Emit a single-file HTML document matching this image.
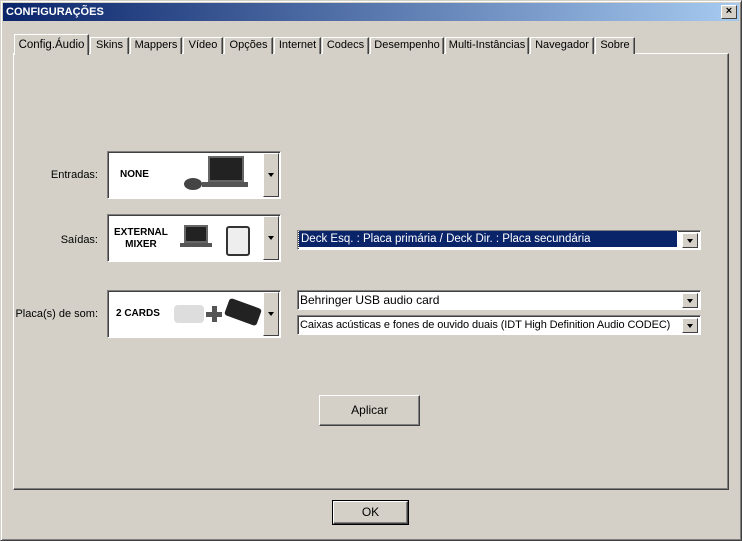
<!DOCTYPE html>
<html><head><meta charset="utf-8"><style>
*{margin:0;padding:0;box-sizing:border-box}
body{width:742px;height:541px;background:#d4d0c8;position:relative;overflow:hidden;font-family:"Liberation Sans",sans-serif;font-size:11px;color:#000}
.a{position:absolute}
.win{left:0;top:0;width:742px;height:541px;border-top:1px solid #d4d0c8;border-left:1px solid #d4d0c8;border-right:1px solid #404040;border-bottom:1px solid #404040;box-shadow:inset 1px 1px 0 #fff,inset -1px -1px 0 #808080}
.title{left:3px;top:3px;width:736px;height:18px;background:linear-gradient(90deg,#0a246a,#a6caf0);color:#fff;font-weight:bold;font-size:11px;line-height:18px;padding-left:3px}
.close{right:5px;top:5px;width:16px;height:14px;background:#d4d0c8;border:1px solid;border-color:#fff #404040 #404040 #fff;font-size:11px;font-weight:bold;line-height:11px;text-align:center}
.tab{top:37px;height:17px;border:1px solid;border-color:#fff #404040 transparent #fff;border-bottom:none;line-height:15px;text-align:center;background:#d4d0c8;box-shadow:inset -1px 0 0 #808080;white-space:nowrap}
.panel{left:13px;top:53px;width:716px;height:437px;border:1px solid;border-color:#fff #404040 #404040 #fff;box-shadow:inset -1px -1px 0 #808080}
.lbl{text-align:right;width:90px;left:8px;white-space:nowrap}
.img{left:107px;width:174px;height:48px;background:#fff;border:1px solid;border-color:#808080 #fff #fff #808080;box-shadow:inset 1px 1px 0 #404040}
.arr{right:1px;top:1px;width:16px;height:44px;background:#d4d0c8;border:1px solid;border-color:#fff #404040 #404040 #fff}
.arr:after,.darr:after{content:"";position:absolute;left:4px;top:50%;margin-top:-2px;border-left:3.5px solid transparent;border-right:3.5px solid transparent;border-top:4px solid #000}
.dd{left:297px;width:404px;height:20px;background:#fff;border:1px solid;border-color:#808080 #fff #fff #808080;box-shadow:inset 1px 1px 0 #404040;font-size:12px;line-height:18px;padding-left:2px;white-space:nowrap;overflow:hidden}
.darr{right:2px;top:2px;width:16px;height:15px;background:#d4d0c8;border:1px solid;border-color:#fff #404040 #404040 #fff}
.btn{border:1px solid;border-color:#fff #404040 #404040 #fff;box-shadow:inset -1px -1px 0 #808080;text-align:center}
.bt{font-weight:bold;font-size:10px;line-height:12px;text-align:center}
</style></head><body>
<div class="a win"></div>
<div class="a title">CONFIGURAÇÕES</div>
<div class="a close">×</div>
<div class="a panel"></div>
<div class="a tab" style="left:90px;width:39px">Skins</div>
<div class="a tab" style="left:130px;width:52px">Mappers</div>
<div class="a tab" style="left:183px;width:40px">Vídeo</div>
<div class="a tab" style="left:224px;width:49px">Opções</div>
<div class="a tab" style="left:274px;width:47px">Internet</div>
<div class="a tab" style="left:322px;width:47px">Codecs</div>
<div class="a tab" style="left:370px;width:74px">Desempenho</div>
<div class="a tab" style="left:445px;width:84px">Multi-Instâncias</div>
<div class="a tab" style="left:530px;width:64px">Navegador</div>
<div class="a tab" style="left:595px;width:40px">Sobre</div>
<div class="a tab" style="left:14px;top:34px;width:75px;height:21px;font-size:11.5px;line-height:20px;border-bottom:none">Config.Áudio</div>

<div class="a lbl" style="top:169px">Entradas:</div>
<div class="a lbl" style="top:234px">Saídas:</div>
<div class="a lbl" style="top:308px">Placa(s) de som:</div>

<div class="a img" style="top:151px">
 <div class="a bt" style="left:12px;top:17px">NONE</div>
 <div class="a" style="left:100px;top:4px;width:36px;height:26px;background:#222;border:2px solid #666"></div>
 <div class="a" style="left:94px;top:30px;width:46px;height:5px;background:#555"></div>
 <div class="a" style="left:76px;top:26px;width:18px;height:12px;border-radius:50%;background:#444"></div>
 <div class="arr a"></div>
</div>
<div class="a img" style="top:214px">
 <div class="a bt" style="left:6px;top:12px">EXTERNAL<br>MIXER</div>
 <div class="a" style="left:76px;top:10px;width:24px;height:18px;background:#222;border:2px solid #666"></div>
 <div class="a" style="left:72px;top:28px;width:32px;height:4px;background:#555"></div>
 <div class="a" style="left:118px;top:11px;width:24px;height:30px;background:#eee;border:2px solid #333;border-radius:3px"></div>
 <div class="arr a"></div>
</div>
<div class="a img" style="top:290px">
 <div class="a bt" style="left:8px;top:17px">2 CARDS</div>
 <div class="a" style="left:66px;top:14px;width:30px;height:18px;background:#ddd;border-radius:4px"></div>
 <div class="a" style="left:98px;top:21px;width:16px;height:5px;background:#555"></div>
 <div class="a" style="left:104px;top:15px;width:5px;height:16px;background:#555"></div>
 <div class="a" style="left:118px;top:12px;width:34px;height:18px;background:#222;border-radius:3px;transform:rotate(20deg)"></div>
 <div class="arr a"></div>
</div>

<div class="a dd" style="top:230px;color:#fff;font-size:11.5px"><div style="background:#0a246a;height:16px;line-height:16px;width:378px;margin-left:-1px;padding-left:2px;outline:1px dotted #fff">Deck Esq. : Placa primária / Deck Dir. : Placa secundária</div><div class="darr a"></div></div>
<div class="a dd" style="top:290px">Behringer USB audio card<div class="darr a"></div></div>
<div class="a dd" style="top:315px;font-size:11px;letter-spacing:-0.1px">Caixas acústicas e fones de ouvido duais (IDT High Definition Audio CODEC)<div class="darr a"></div></div>

<div class="a btn" style="left:319px;top:395px;width:101px;height:31px;line-height:29px;font-size:12px">Aplicar</div>
<div class="a btn" style="left:333px;top:501px;width:75px;height:23px;line-height:21px;font-size:12px;outline:1px solid #000">OK</div>
</body></html>
